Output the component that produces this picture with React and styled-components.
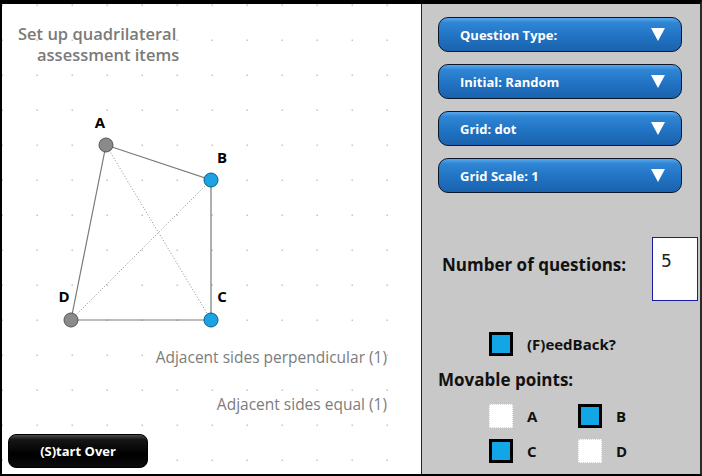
import React from "react";
import styled, { createGlobalStyle } from "styled-components";

const GlobalStyle = createGlobalStyle`
  html, body {
    margin: 0;
    padding: 0;
    width: 702px;
    height: 476px;
    overflow: hidden;
    background: #fff;
  }
  * { box-sizing: border-box; }
`;

const FONT = `"Open Sans", "Noto Sans", sans-serif`;

const Frame = styled.div`
  width: 702px;
  height: 476px;
  display: grid;
  grid-template-columns: 420px 1fr;
  border-top: 4px solid #000;
  border-left: 2px solid #000;
  border-right: 2px solid #2a2a2a;
  border-bottom: 2px solid #000;
  font-family: ${FONT};
`;

const Canvas = styled.div`
  position: relative;
  background: #fff;
  border-right: 1px solid #222;
  display: flex;
  flex-direction: column;
  padding: 19px 0 6px 0;
`;

const Figure = styled.svg`
  position: absolute;
  inset: 0;
  z-index: 0;
`;

const Layer = styled.div`
  position: relative;
  z-index: 1;
  display: flex;
  flex-direction: column;
  flex: 1;
`;

const TitleLine = styled.div`
  font-size: 16.5px;
  font-weight: 600;
  color: #7a7a7a;
  line-height: 21px;
  padding-left: ${(p) => p.$indent}px;
`;

const Feedback = styled.div`
  align-self: flex-end;
  margin-right: 34px;
  font-size: 15.5px;
  color: #7c7c7c;
  line-height: 24px;
  background: #fff;
  margin-top: ${(p) => p.$top}px;
`;

const StartButton = styled.button`
  margin: auto 0 0 6px;
  width: 140px;
  height: 34px;
  border: 1px solid #000;
  border-radius: 8px;
  background: linear-gradient(#4a4a4a 0%, #161616 14%, #000 60%, #0c0c0c 100%);
  color: #fff;
  font-family: ${FONT};
  font-weight: 700;
  font-size: 13px;
  padding: 0;
`;

const Panel = styled.div`
  background: #c8c8c8;
  padding: 13px 18px 0 16px;
  display: flex;
  flex-direction: column;
`;

const Dropdown = styled.div`
  height: 35px;
  margin-bottom: 12px;
  border: 1px solid #0b1626;
  border-radius: 10px;
  background: linear-gradient(#5aa8ec 0%, #2f86d4 14%, #2173c3 55%, #1a62ad 100%);
  display: flex;
  align-items: center;
  justify-content: space-between;
  padding: 0 16px 0 21px;
  color: #fff;
  font-weight: 700;
  font-size: 13px;
`;

const Arrow = styled.span`
  width: 0;
  height: 0;
  border-left: 7px solid transparent;
  border-right: 7px solid transparent;
  border-top: 13px solid #fff;
`;

const NumberRow = styled.div`
  margin-top: 32px;
  margin-right: -16px;
  display: flex;
  align-items: center;
  justify-content: space-between;
  padding-left: 4px;
`;

const Label = styled.div`
  font-weight: 700;
  font-size: ${(p) => p.$size}px;
  color: #111;
`;

const NumberBox = styled.div`
  width: 46px;
  height: 64px;
  background: #fff;
  border: 1px solid #1a1aa8;
  font-size: 17px;
  color: #222;
  padding: 13px 0 0 8px;
  line-height: 20px;
  font-family: "DejaVu Sans", sans-serif;
`;

const CheckRow = styled.div`
  display: flex;
  align-items: center;
  gap: 14px;
  padding-left: ${(p) => p.$indent || 0}px;
  margin-top: ${(p) => p.$top || 0}px;
`;

const Box = styled.div`
  width: 24px;
  height: 24px;
  background: ${(p) => (p.$checked ? "#12a6e6" : "#fff")};
  border: ${(p) => (p.$checked ? "3px solid #000" : "1px dotted #d8d8d8")};
`;

const PointGrid = styled.div`
  margin-top: 13px;
  padding-left: 51px;
  display: grid;
  grid-template-columns: 89px 89px;
  row-gap: 11px;
`;

const points = {
  A: { x: 104, y: 141, movable: false, lx: 98, ly: 118 },
  B: { x: 209, y: 176, movable: true, lx: 220, ly: 153 },
  C: { x: 209, y: 316, movable: true, lx: 220, ly: 292 },
  D: { x: 69, y: 316, movable: false, lx: 62, ly: 292 },
};

function Drawing() {
  const dots = [];
  for (let gx = 0; gx < 13; gx++) {
    for (let gy = 0; gy < 14; gy++) {
      dots.push(
        <rect key={gx + "-" + gy} x={gx * 35 - 0.5} y={gy * 35 + 0.5} width="1.5" height="1.5" fill="#c4c4c4" />
      );
    }
  }
  const { A, B, C, D } = points;
  return (
    <Figure width="419" height="470" viewBox="0 0 419 470">
      {dots}
      <line x1={A.x} y1={A.y} x2={C.x} y2={C.y} stroke="#8a8a8a" strokeWidth="1" strokeDasharray="1 2" />
      <line x1={B.x} y1={B.y} x2={D.x} y2={D.y} stroke="#8a8a8a" strokeWidth="1" strokeDasharray="1 2" />
      <polygon
        points={`${A.x},${A.y} ${B.x},${B.y} ${C.x},${C.y} ${D.x},${D.y}`}
        fill="none"
        stroke="#7a7a7a"
        strokeWidth="1.2"
      />
      {Object.entries(points).map(([name, p]) => (
        <g key={name}>
          <circle
            cx={p.x}
            cy={p.y}
            r="7"
            fill={p.movable ? "#1ba3e4" : "#8a8a8a"}
            stroke={p.movable ? "#0d5d88" : "#555"}
            strokeWidth="1"
          />
          <text
            x={p.lx}
            y={p.ly}
            textAnchor="middle"
            dominantBaseline="central"
            fontFamily={FONT}
            fontWeight="700"
            fontSize="15"
            fill="#000"
          >
            {name}
          </text>
        </g>
      ))}
    </Figure>
  );
}

const dropdowns = ["Question Type:", "Initial: Random", "Grid: dot", "Grid Scale: 1"];

export default function App() {
  return (
    <>
      <GlobalStyle />
      <Frame>
        <Canvas>
          <Drawing />
          <Layer>
            <TitleLine $indent={16}>Set up quadrilateral</TitleLine>
            <TitleLine $indent={35}>assessment items</TitleLine>
            <Feedback $top={280}>Adjacent sides perpendicular (1)</Feedback>
            <Feedback $top={23}>Adjacent sides equal (1)</Feedback>
            <StartButton>(S)tart Over</StartButton>
          </Layer>
        </Canvas>
        <Panel>
          {dropdowns.map((d) => (
            <Dropdown key={d}>
              {d}
              <Arrow />
            </Dropdown>
          ))}
          <NumberRow>
            <Label $size={17} style={{ marginBottom: 10 }}>Number of questions:</Label>
            <NumberBox>5</NumberBox>
          </NumberRow>
          <CheckRow $indent={51} $top={31}>
            <Box $checked />
            <Label $size={15}>(F)eedBack?</Label>
          </CheckRow>
          <Label $size={17} style={{ marginTop: 12 }}>Movable points:</Label>
          <PointGrid>
            {Object.entries(points).map(([name, p]) => (
              <CheckRow key={name}>
                <Box $checked={p.movable} />
                <Label $size={15}>{name}</Label>
              </CheckRow>
            ))}
          </PointGrid>
        </Panel>
      </Frame>
    </>
  );
}
